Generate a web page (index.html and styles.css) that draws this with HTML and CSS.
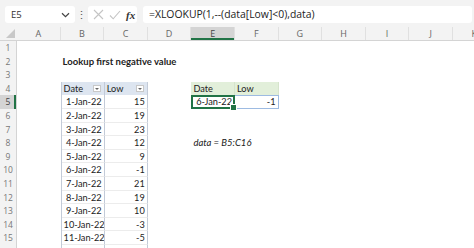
FILE: index.html
```html
<!DOCTYPE html>
<html lang="en">
<head>
    <meta charset="UTF-8">
    <meta name="viewport" content="width=device-width, initial-scale=1.0">
    <title>Lookup first negative value</title>
    <link rel="stylesheet" href="styles.css">
</head>
<body>
    <div class="topbar">
        <div class="namebox">
            <span>E5</span>
            <svg class="chev" width="9" height="6" viewBox="0 0 9 6"><path d="M1 1.2 L4.5 4.6 L8 1.2" fill="none" stroke="#444" stroke-width="1.2"/></svg>
        </div>
        <div class="dots">⋮</div>
        <div class="fxbox">
            <svg width="11" height="11" viewBox="0 0 11 11"><path d="M1 1 L10 10 M10 1 L1 10" stroke="#c4c4c4" stroke-width="1.1"/></svg>
            <svg width="12" height="10" viewBox="0 0 12 10"><path d="M1 5.5 L4.2 8.8 L11 1" fill="none" stroke="#c4c4c4" stroke-width="1.1"/></svg>
            <span class="fx">fx</span>
        </div>
        <div class="formula">=XLOOKUP(1,--(data[Low]&lt;0),data)</div>
    </div>

    <div class="colheads">
        <div class="corner"><svg width="9" height="9" viewBox="0 0 9 9"><path d="M9 0 L9 9 L0 9 Z" fill="#c8c8c8"/></svg></div>
        <div class="ch">A</div>
        <div class="ch">B</div>
        <div class="ch">C</div>
        <div class="ch">D</div>
        <div class="ch sel">E</div>
        <div class="ch">F</div>
        <div class="ch">G</div>
        <div class="ch">H</div>
        <div class="ch">I</div>
        <div class="ch">J</div>
        <div class="ch">K</div>
    </div>

    <div class="body">
        <div class="rowheads">
            <div class="rh">1</div>
            <div class="rh">2</div>
            <div class="rh">3</div>
            <div class="rh">4</div>
            <div class="rh sel">5</div>
            <div class="rh">6</div>
            <div class="rh">7</div>
            <div class="rh">8</div>
            <div class="rh">9</div>
            <div class="rh">10</div>
            <div class="rh">11</div>
            <div class="rh">12</div>
            <div class="rh">13</div>
            <div class="rh">14</div>
            <div class="rh">15</div>
            <div class="rh">16</div>
        </div>

        <div class="cells">
            <div class="title">Lookup first negative value</div>

            <div class="datatable">
                <div class="th">Date<span class="filter"></span></div>
                <div class="th">Low<span class="filter"></span></div>
                <div class="td">1-Jan-22</div><div class="td">15</div>
                <div class="td">2-Jan-22</div><div class="td">19</div>
                <div class="td">3-Jan-22</div><div class="td">23</div>
                <div class="td">4-Jan-22</div><div class="td">12</div>
                <div class="td">5-Jan-22</div><div class="td">9</div>
                <div class="td">6-Jan-22</div><div class="td">-1</div>
                <div class="td">7-Jan-22</div><div class="td">21</div>
                <div class="td">8-Jan-22</div><div class="td">19</div>
                <div class="td">9-Jan-22</div><div class="td">10</div>
                <div class="td">10-Jan-22</div><div class="td">-3</div>
                <div class="td">11-Jan-22</div><div class="td">-5</div>
                <div class="td">12-Jan-22</div><div class="td">-4</div>
            </div>

            <div class="result">
                <div class="rth">Date</div>
                <div class="rth">Low</div>
                <div class="rtd active">6-Jan-22<span class="handle"></span></div>
                <div class="rtd spill">-1</div>
            </div>

            <div class="note">data = B5:C16</div>
        </div>
    </div>
</body>
</html>
```

FILE: styles.css
```css
body {
    margin: 0;
    width: 474px;
    height: 248px;
    overflow: hidden;
    background: #fff;
    font-family: Lato, "Liberation Sans", sans-serif;
    color: #222;
}

/* formula bar */
.topbar {
    height: 27px;
    background: #f3f3f3;
    display: flex;
    align-items: flex-start;
    padding-top: 6px;
    box-sizing: border-box;
}

.namebox {
    margin-left: 5px;
    width: 70px;
    height: 17px;
    background: #fff;
    border-radius: 3px;
    display: flex;
    align-items: center;
    justify-content: space-between;
    padding: 0 5px 0 6px;
    box-sizing: border-box;
    font-family: "Open Sans", sans-serif;
    font-size: 9.5px;
    color: #333;
}

.dots {
    width: 13px;
    text-align: center;
    font-size: 11px;
    line-height: 17px;
    color: #555;
}

.fxbox {
    width: 49px;
    height: 17px;
    background: #fff;
    border-radius: 3px;
    display: flex;
    align-items: center;
    gap: 5px;
    padding-left: 5px;
    box-sizing: border-box;
}

.fx {
    font-family: "Liberation Serif", serif;
    font-style: italic;
    font-weight: bold;
    font-size: 11px;
    color: #333;
}

.formula {
    margin-left: 6px;
    width: 329px;
    height: 17px;
    background: #fff;
    border-radius: 3px;
    padding-left: 6px;
    box-sizing: border-box;
    font-family: "Open Sans", sans-serif;
    font-size: 10.4px;
    line-height: 17px;
    color: #222;
    white-space: nowrap;
}

/* headers */
.colheads {
    display: flex;
    height: 13px;
    background: #f3f3f3;
    border-bottom: 1px solid #d4d4d4;
    overflow: hidden;
}

.corner {
    width: 17px;
    flex-shrink: 0;
    display: flex;
    align-items: flex-end;
    justify-content: flex-end;
    padding: 0 2px 2px 0;
    box-sizing: border-box;
}

.ch {
    width: 43.6px;
    flex-shrink: 0;
    text-align: center;
    font-family: "Open Sans", sans-serif;
    font-size: 9px;
    line-height: 13px;
    color: #666;
    border-right: 1px solid #e0e0e0;
    box-sizing: border-box;
}

.ch.sel {
    background: #d4d4d4;
    color: #444;
    box-shadow: inset 0 -2px 0 #217346;
}

.body {
    display: flex;
}

.rowheads {
    width: 17px;
    flex-shrink: 0;
    background: #f3f3f3;
    border-right: 1px solid #d4d4d4;
    box-sizing: border-box;
}

.rh {
    height: 13.6px;
    text-align: center;
    font-family: "Open Sans", sans-serif;
    font-size: 8.5px;
    line-height: 13.6px;
    color: #777;
}

.rh.sel {
    background: #d4d4d4;
    color: #444;
    box-shadow: inset -2px 0 0 #217346;
}

/* sheet cells */
.cells {
    display: grid;
    grid-template-columns: repeat(11, 43.6px);
    grid-template-rows: repeat(16, 13.6px);
    font-size: 9.2px;
    white-space: nowrap;
}

.title {
    grid-column: 2 / span 3;
    grid-row: 2;
    font-weight: bold;
    font-size: 9.5px;
    line-height: 13.6px;
    padding-left: 2px;
}

.datatable {
    grid-column: 2 / 4;
    grid-row: 4 / 17;
    display: grid;
    grid-template-columns: 1fr 1fr;
    grid-auto-rows: 13.6px;
    border-left: 1px solid #c3cbd8;
}

.th, .td {
    line-height: 13.6px;
    padding: 0 2px;
    border-right: 1px solid #c3cbd8;
    box-sizing: border-box;
    overflow: hidden;
}

.th {
    background: #dde5f0;
    position: relative;
}

.td {
    text-align: right;
    border-bottom: 1px solid #ececec;
}

.filter {
    position: absolute;
    right: 3px;
    top: 3px;
    width: 8px;
    height: 7px;
    background: #fff;
    border: 1px solid #c8c8c8;
    box-sizing: border-box;
}

.filter::after {
    content: "";
    position: absolute;
    left: 1.5px;
    top: 2px;
    border-left: 2px solid transparent;
    border-right: 2px solid transparent;
    border-top: 2px solid #666;
}

.result {
    grid-column: 5 / 7;
    grid-row: 4 / 6;
    display: grid;
    grid-template-columns: 1fr 1fr;
    grid-auto-rows: 13.6px;
}

.rth {
    background: #e2efda;
    line-height: 13.6px;
    padding: 0 2px;
    border-right: 1px solid #d6e4cc;
}

.rtd {
    line-height: 13.6px;
    padding: 0 2px;
    text-align: right;
    box-sizing: border-box;
}

.rtd.active {
    border: 2px solid #217346;
    line-height: 9.6px;
    padding: 0 1px;
    position: relative;
}

.rtd.spill {
    border: 1px solid #9dbbe2;
    border-left: none;
    line-height: 11.6px;
}

.handle {
    position: absolute;
    right: -4px;
    bottom: -4px;
    width: 5px;
    height: 5px;
    background: #217346;
    border: 1px solid #fff;
}

.note {
    grid-column: 5 / span 2;
    grid-row: 8;
    font-style: italic;
    font-size: 9.5px;
    line-height: 13.6px;
    padding-left: 2px;
}
```
